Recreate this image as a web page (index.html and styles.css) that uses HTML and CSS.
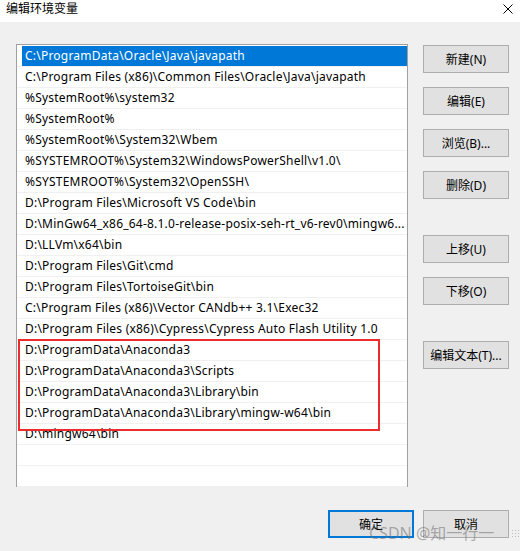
FILE: index.html
```html
<!DOCTYPE html>
<html lang="zh-CN">
<head>
<meta charset="utf-8">
<title>编辑环境变量</title>
<link rel="stylesheet" href="styles.css">
</head>
<body>
<div class="window">
  <div class="titlebar">
    <span class="title">编辑环境变量</span>
    <svg class="close" width="10" height="10" viewBox="0 0 10 10"><path d="M0.5 0.5 L9.5 9.5 M9.5 0.5 L0.5 9.5" stroke="#000" stroke-width="1" fill="none"/></svg>
  </div>
  <div class="main">
    <div class="list">
      <div class="row selected"><span class="cell">C:\ProgramData\Oracle\Java\javapath</span></div>
      <div class="row"><span class="cell">C:\Program Files (x86)\Common Files\Oracle\Java\javapath</span></div>
      <div class="row"><span class="cell">%SystemRoot%\system32</span></div>
      <div class="row"><span class="cell">%SystemRoot%</span></div>
      <div class="row"><span class="cell">%SystemRoot%\System32\Wbem</span></div>
      <div class="row"><span class="cell">%SYSTEMROOT%\System32\WindowsPowerShell\v1.0\</span></div>
      <div class="row"><span class="cell">%SYSTEMROOT%\System32\OpenSSH\</span></div>
      <div class="row"><span class="cell">D:\Program Files\Microsoft VS Code\bin</span></div>
      <div class="row"><span class="cell">D:\MinGw64_x86_64-8.1.0-release-posix-seh-rt_v6-rev0\mingw6...</span></div>
      <div class="row"><span class="cell">D:\LLVm\x64\bin</span></div>
      <div class="row"><span class="cell">D:\Program Files\Git\cmd</span></div>
      <div class="row"><span class="cell">D:\Program Files\TortoiseGit\bin</span></div>
      <div class="row"><span class="cell">C:\Program Files (x86)\Vector CANdb++ 3.1\Exec32</span></div>
      <div class="row"><span class="cell">D:\Program Files (x86)\Cypress\Cypress Auto Flash Utility 1.0</span></div>
      <div class="row"><span class="cell">D:\ProgramData\Anaconda3</span></div>
      <div class="row"><span class="cell">D:\ProgramData\Anaconda3\Scripts</span></div>
      <div class="row"><span class="cell">D:\ProgramData\Anaconda3\Library\bin</span></div>
      <div class="row"><span class="cell">D:\ProgramData\Anaconda3\Library\mingw-w64\bin</span></div>
      <div class="row"><span class="cell">D:\mingw64\bin</span></div>
      <div class="row"><span class="cell"></span></div>
      <div class="row"><span class="cell"></span></div>
      <div class="highlight-box"></div>
    </div>
    <div class="side">
      <button class="btn">新建(N)</button>
      <button class="btn">编辑(E)</button>
      <button class="btn">浏览(B)...</button>
      <button class="btn">删除(D)</button>
      <button class="btn gap-before">上移(U)</button>
      <button class="btn">下移(O)</button>
      <button class="btn gap-before">编辑文本(T)...</button>
    </div>
  </div>
  <div class="footer">
    <button class="btn default">确定</button>
    <button class="btn">取消</button>
    <span class="watermark">CSDN @知一行一</span>
    <span class="grip"></span>
  </div>
</div>
</body>
</html>
```

FILE: styles.css
```css
html, body {
  margin: 0;
  padding: 0;
}
body {
  background: #f0f0f0;
  font-family: "Noto Sans", "Noto Sans CJK SC", sans-serif;
  font-size: 12px;
  color: #000;
}
.window {
  position: relative;
  width: 520px;
  height: 551px;
  overflow: hidden;
}
.titlebar {
  background: #fff;
  display: flex;
  align-items: center;
  justify-content: space-between;
  padding: 0 7px 6px 6px;
  height: 16px;
}
.title {
  font-family: "Noto Sans CJK SC", sans-serif;
  font-size: 12px;
  line-height: 16px;
}
.close {
  display: block;
  margin-top: 2px;
}
.main {
  display: flex;
  padding: 22px 0 0 16px;
  gap: 15px;
}
.list {
  position: relative;
  width: 390px;
  height: 440px;
  border: 1px solid #a0a0a0;
  background: #fff;
  padding-top: 1px;
}
.row {
  height: 20px;
  border-bottom: 1px solid #f0f0f0;
  display: flex;
}
.cell {
  flex: 1;
  margin-left: 5px;
  padding-left: 3px;
  line-height: 20px;
  letter-spacing: 0.22px;
  white-space: nowrap;
  overflow: hidden;
}
.selected .cell {
  background: #0078d7;
  color: #fff;
}
.highlight-box {
  position: absolute;
  left: 1px;
  top: 294px;
  width: 358px;
  height: 88px;
  border: 2px solid #ec2c2c;
}
.side {
  display: flex;
  flex-direction: column;
  gap: 14px;
  padding-top: 1px;
}
.btn {
  width: 86px;
  height: 28px;
  border: 1px solid #adadad;
  background: #e1e1e1;
  font-family: "Noto Sans", "Noto Sans CJK SC", sans-serif;
  font-size: 12px;
  color: #000;
  padding: 0;
  margin: 0;
}
.gap-before {
  margin-top: 22px;
}
.footer {
  position: relative;
  display: flex;
  justify-content: flex-end;
  gap: 9px;
  padding: 23px 11px 0 0;
}
.btn.default {
  border: 2px solid #0078d7;
}
.watermark {
  position: absolute;
  left: 369px;
  top: 36px;
  font-family: "Noto Sans", "Noto Sans CJK SC", sans-serif;
  font-size: 16px;
  line-height: 20px;
  color: rgba(110, 110, 110, 0.55);
  pointer-events: none;
}
.grip {
  position: absolute;
  right: 1px;
  bottom: 1px;
  width: 8px;
  height: 8px;
  background-image: radial-gradient(circle, #bcbcbc 0.8px, transparent 1px);
  background-size: 3px 3px;
}
```
